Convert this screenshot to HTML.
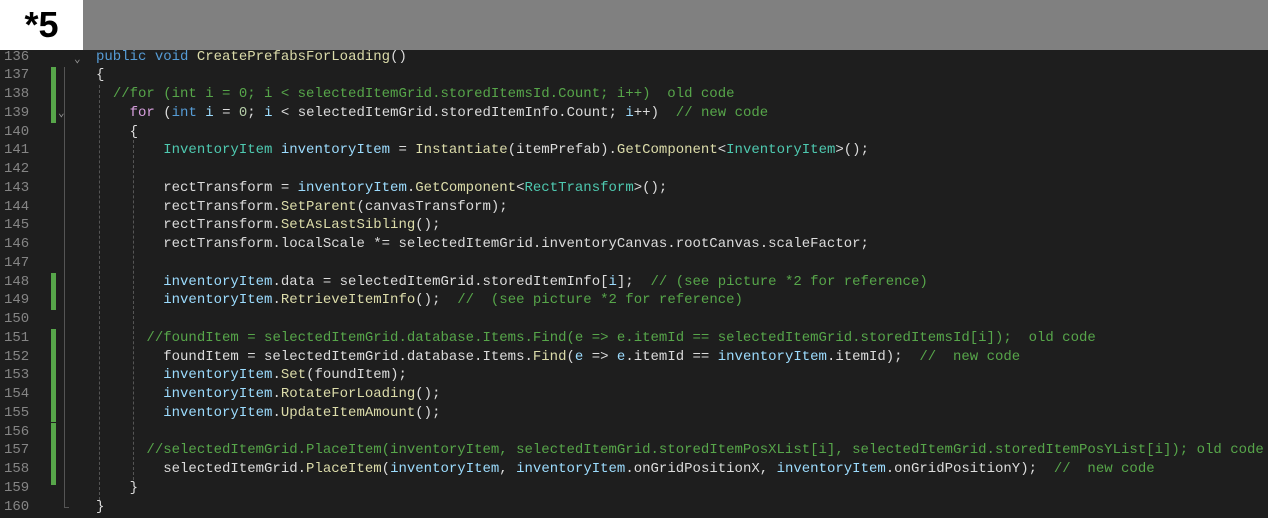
<!DOCTYPE html>
<html><head><meta charset="utf-8"><style>
body{margin:0;width:1268px;height:518px;background:#1e1e1e;overflow:hidden;position:relative;font-family:"Liberation Mono",monospace;font-size:14px;}
#hdr{position:absolute;left:0;top:0;width:1268px;height:50px;background:#808080;}
#lbl{position:absolute;left:0;top:0;width:83px;height:50px;background:#fff;font-family:"Liberation Sans",sans-serif;font-weight:bold;font-size:36px;line-height:50px;color:#000;text-align:center;}
#nums{position:absolute;left:4px;top:47.5px;color:#858585;line-height:18.75px;white-space:pre;}
#code{position:absolute;left:96px;top:47.5px;color:#dcdcdc;white-space:pre;margin:0;font-family:"Liberation Mono",monospace;font-size:14px;line-height:18.75px;}
.g{position:absolute;left:51px;width:5px;background:#57a64a;}
.k{color:#569cd6}.m{color:#dcdcaa}.t{color:#4ec9b0}.v{color:#9cdcfe}.c{color:#57a64a}.n{color:#b5cea8}.f{color:#d8a0df}
.vl{position:absolute;border-left:1px dashed #555;}
</style></head><body>
<div id="hdr"></div><div id="lbl">*5</div>
<div class="g" style="top:67px;height:56px"></div>
<div class="g" style="top:273px;height:37px"></div>
<div class="g" style="top:329px;height:93px"></div>
<div class="g" style="top:423px;height:62px"></div>
<div style="position:absolute;left:64px;top:67px;height:440px;border-left:1px solid #555"></div>
<div style="position:absolute;left:64px;top:507px;width:5px;border-top:1px solid #555"></div>
<div class="vl" style="left:99px;top:85px;height:415px"></div>
<div class="vl" style="left:133px;top:140px;height:340px"></div>
<div id="nums">136
137
138
139
140
141
142
143
144
145
146
147
148
149
150
151
152
153
154
155
156
157
158
159
160</div>
<pre id="code"><span class="k">public</span> <span class="k">void</span> <span class="m">CreatePrefabsForLoading</span>()
{
  <span class="c">//for (int i = 0; i &lt; selectedItemGrid.storedItemsId.Count; i++)  old code</span>
    <span class="f">for</span> (<span class="k">int</span> <span class="v">i</span> = <span class="n">0</span>; <span class="v">i</span> &lt; selectedItemGrid.storedItemInfo.Count; <span class="v">i</span>++)  <span class="c">// new code</span>
    {
        <span class="t">InventoryItem</span> <span class="v">inventoryItem</span> = <span class="m">Instantiate</span>(itemPrefab).<span class="m">GetComponent</span>&lt;<span class="t">InventoryItem</span>&gt;();

        rectTransform = <span class="v">inventoryItem</span>.<span class="m">GetComponent</span>&lt;<span class="t">RectTransform</span>&gt;();
        rectTransform.<span class="m">SetParent</span>(canvasTransform);
        rectTransform.<span class="m">SetAsLastSibling</span>();
        rectTransform.localScale *= selectedItemGrid.inventoryCanvas.rootCanvas.scaleFactor;

        <span class="v">inventoryItem</span>.data = selectedItemGrid.storedItemInfo[<span class="v">i</span>];  <span class="c">// (see picture *2 for reference)</span>
        <span class="v">inventoryItem</span>.<span class="m">RetrieveItemInfo</span>();  <span class="c">//  (see picture *2 for reference)</span>

      <span class="c">//foundItem = selectedItemGrid.database.Items.Find(e =&gt; e.itemId == selectedItemGrid.storedItemsId[i]);  old code</span>
        foundItem = selectedItemGrid.database.Items.<span class="m">Find</span>(<span class="v">e</span> =&gt; <span class="v">e</span>.itemId == <span class="v">inventoryItem</span>.itemId);  <span class="c">//  new code</span>
        <span class="v">inventoryItem</span>.<span class="m">Set</span>(foundItem);
        <span class="v">inventoryItem</span>.<span class="m">RotateForLoading</span>();
        <span class="v">inventoryItem</span>.<span class="m">UpdateItemAmount</span>();

      <span class="c">//selectedItemGrid.PlaceItem(inventoryItem, selectedItemGrid.storedItemPosXList[i], selectedItemGrid.storedItemPosYList[i]); old code</span>
        selectedItemGrid.<span class="m">PlaceItem</span>(<span class="v">inventoryItem</span>, <span class="v">inventoryItem</span>.onGridPositionX, <span class="v">inventoryItem</span>.onGridPositionY);  <span class="c">//  new code</span>
    }
}</pre>
<div style="position:absolute;left:74px;top:52px;color:#999;font-size:11px">&#8964;</div>
<div style="position:absolute;left:58px;top:106px;color:#999;font-size:11px">&#8964;</div>
</body></html>
